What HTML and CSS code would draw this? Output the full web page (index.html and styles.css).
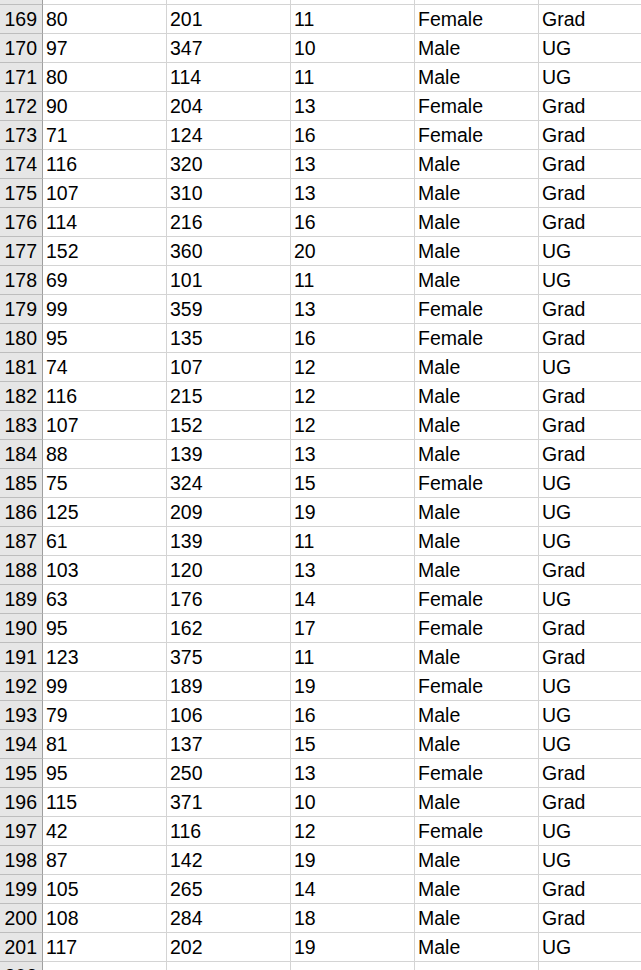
FILE: index.html
```html
<!DOCTYPE html>
<html>
<head>
<meta charset="utf-8">
<link rel="stylesheet" href="styles.css">
</head>
<body>
<div class="sheet" id="sheet">
  <div class="hdr top"></div><div class="cell top"></div><div class="cell top"></div><div class="cell top"></div><div class="cell top"></div><div class="cell top"></div><div class="cell top last"></div>
</div>
<script src="app.js"></script>
</body>
</html>
```
FILE: styles.css
```css
html, body {
  margin: 0;
  padding: 0;
  overflow: hidden;
  background: #ffffff;
}
.sheet {
  display: grid;
  grid-template-columns: 43px repeat(5, 124px) 1fr;
  height: 970px;
  overflow: hidden;
  font-family: "Liberation Sans", Arial, sans-serif;
  font-size: 19.5px;
  color: #000;
  align-content: start;
}
.hdr, .cell {
  box-sizing: border-box;
  height: 29px;
  padding-top: 1px;
  line-height: 27px;
  white-space: nowrap;
  overflow: hidden;
}
.hdr {
  background: #e6e6e6;
  border-right: 1px solid #9f9f9f;
  border-bottom: 1px solid #bdbdbd;
  text-align: right;
  padding-right: 5px;
}
.cell {
  border-right: 1px solid #d4d4d4;
  border-bottom: 1px solid #d4d4d4;
  padding-left: 3px;
}
.cell.last {
  border-right: none;
}
.top {
  height: 5px;
  padding: 0;
}
```
FILE: app.js
```js
const rows = [
[169,80,201,11,"Female","Grad"],
[170,97,347,10,"Male","UG"],
[171,80,114,11,"Male","UG"],
[172,90,204,13,"Female","Grad"],
[173,71,124,16,"Female","Grad"],
[174,116,320,13,"Male","Grad"],
[175,107,310,13,"Male","Grad"],
[176,114,216,16,"Male","Grad"],
[177,152,360,20,"Male","UG"],
[178,69,101,11,"Male","UG"],
[179,99,359,13,"Female","Grad"],
[180,95,135,16,"Female","Grad"],
[181,74,107,12,"Male","UG"],
[182,116,215,12,"Male","Grad"],
[183,107,152,12,"Male","Grad"],
[184,88,139,13,"Male","Grad"],
[185,75,324,15,"Female","UG"],
[186,125,209,19,"Male","UG"],
[187,61,139,11,"Male","UG"],
[188,103,120,13,"Male","Grad"],
[189,63,176,14,"Female","UG"],
[190,95,162,17,"Female","Grad"],
[191,123,375,11,"Male","Grad"],
[192,99,189,19,"Female","UG"],
[193,79,106,16,"Male","UG"],
[194,81,137,15,"Male","UG"],
[195,95,250,13,"Female","Grad"],
[196,115,371,10,"Male","Grad"],
[197,42,116,12,"Female","UG"],
[198,87,142,19,"Male","UG"],
[199,105,265,14,"Male","Grad"],
[200,108,284,18,"Male","Grad"],
[201,117,202,19,"Male","UG"],
[202,"","","","",""]
];
const sheet = document.getElementById("sheet");
for (const r of rows) {
  const h = document.createElement("div");
  h.className = "hdr";
  h.textContent = r[0];
  sheet.appendChild(h);
  for (let i = 1; i <= 6; i++) {
    const c = document.createElement("div");
    c.className = "cell" + (i === 6 ? " last" : "");
    c.textContent = i <= 5 ? r[i] : "";
    sheet.appendChild(c);
  }
}
```
